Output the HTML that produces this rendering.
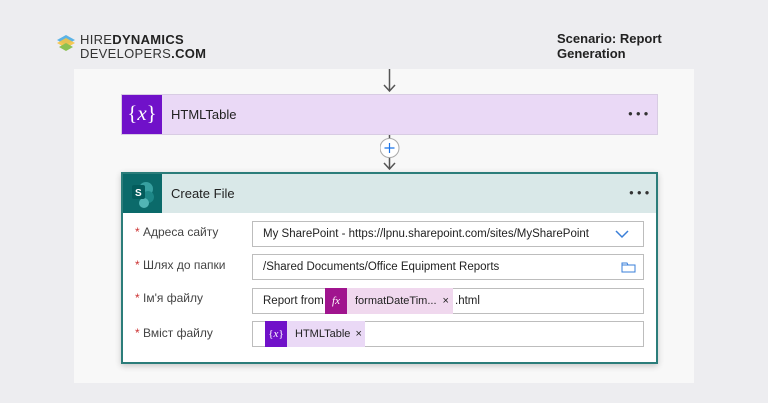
<!DOCTYPE html><html><head><style>
*{margin:0;padding:0;box-sizing:border-box}
body{width:768px;height:403px;background:#ededf0;font-family:"Liberation Sans","DejaVu Sans",sans-serif;position:relative;overflow:hidden;color:#222}
.abs{position:absolute}
.panel{left:74px;top:69px;width:620px;height:314px;background:#f8f8f8}
.card1{left:121px;top:94px;width:537px;height:41px;background:#ead9f6;border:1px solid #d8cce3}
.ic1{left:0;top:0;width:40px;height:39px;background:#7011c9;color:#fff;font-family:"Liberation Serif",serif;font-size:21px;text-align:center;line-height:37px}
.dots{font-size:8px;letter-spacing:3px;color:#333}
.card2{left:121px;top:172px;width:537px;height:192px;background:#fff;border:2px solid #2b7d7a;box-shadow:0 2px 6px rgba(0,0,0,.2)}
.hdr{left:0;top:0;width:533px;height:39px;background:#d9e8e8}
.lbl{font-size:12px;color:#444;left:12px}
.lbl b{color:#c33;font-weight:normal}
.inp{left:129px;width:392px;height:26px;border:1px solid #bdbdbd;font-size:11.5px;line-height:24px;padding-left:10px;white-space:nowrap}
.tok{position:absolute;top:-1px;height:26px;font-size:11px;line-height:26px;display:flex;white-space:nowrap}
.tok .i{width:22px;height:26px;color:#fff;text-align:center;font-family:'Liberation Serif',serif;flex:none}
</style></head><body>
<div class="abs" style="left:56px;top:34px">
<svg width="20" height="20" viewBox="0 0 20 20"><polygon points="10,1 19,6 10,11 1,6" fill="#5bb3e6"/><polygon points="1,9 10,14 19,9 10,4" fill="#f5c342" opacity=".9"/><polygon points="3,13 10,17 17,13 10,9" fill="#8cc152"/></svg></div>
<div class="abs" style="left:80px;top:33px;font-size:13px;line-height:14px;color:#333;letter-spacing:.3px">HIRE<b style="color:#222">DYNAMICS</b><br>DEVELOPERS<b style="color:#222">.COM</b></div>
<div class="abs" style="left:557px;top:31px;font-size:13px;line-height:15px;font-weight:bold;color:#222">Scenario: Report<br>Generation</div>
<div class="abs panel"></div>
<svg class="abs" style="left:380px;top:69px" width="20" height="110"><line x1="9.5" y1="0" x2="9.5" y2="22" stroke="#555" stroke-width="1.5"/><polyline points="4,16 9.5,22 15,16" fill="none" stroke="#555" stroke-width="1.5"/><line x1="9.5" y1="66" x2="9.5" y2="100" stroke="#555" stroke-width="1.5"/><polyline points="4,94 9.5,100 15,94" fill="none" stroke="#555" stroke-width="1.5"/><circle cx="9.5" cy="79" r="9.5" fill="#fff" stroke="#aaa"/><path d="M9.5 74v10M4.5 79h10" stroke="#1a73e8" stroke-width="1.2"/></svg>
<div class="abs card1"><div class="abs ic1">{<i>x</i>}</div><div class="abs" style="left:49px;top:12px;font-size:13px">HTMLTable</div><div class="abs dots" style="left:506px;top:14px">●●●</div></div>
<div class="abs card2"><div class="abs hdr">
<div class="abs" style="left:0;top:0;width:39px;height:39px;background:#0b6a6a"><svg width="39" height="39"><circle cx="23" cy="15" r="7" fill="#37a0a0"/><circle cx="25" cy="23" r="6" fill="#1d8787"/><circle cx="21" cy="29" r="5" fill="#52b5b5"/><rect x="9" y="11" width="13" height="14" rx="2" fill="#035c5c"/><text x="12" y="22" fill="#fff" font-size="10" font-weight="bold" font-family="Liberation Sans">S</text></svg></div>
<div class="abs" style="left:48px;top:12px;font-size:13px">Create File</div><div class="abs dots" style="left:506px;top:14px">●●●</div></div>
<div class="abs lbl" style="top:51px"><b>*</b> Адреса сайту</div>
<div class="abs lbl" style="top:84px"><b>*</b> Шлях до папки</div>
<div class="abs lbl" style="top:117px"><b>*</b> Ім'я файлу</div>
<div class="abs lbl" style="top:152px"><b>*</b> Вміст файлу</div>
<div class="abs inp" style="top:47px">My SharePoint - https://lpnu.sharepoint.com/sites/MySharePoint<svg class="abs" style="right:14px;top:8px" width="14" height="9"><polyline points="1,1 7,7 13,1" fill="none" stroke="#3a7fd8" stroke-width="1.5"/></svg></div>
<div class="abs inp" style="top:80px">/Shared Documents/Office Equipment Reports<svg class="abs" style="right:7px;top:6px" width="15" height="12"><path d="M1 2h5l1 2h7v7H1z" fill="none" stroke="#3a7fd8"/><path d="M1 4h13" stroke="#3a7fd8"/></svg></div>
<div class="abs inp" style="top:114px">Report from<div class="tok" style="left:72px;width:128px;background:#f0d8ee"><span class="i" style="background:#a0148e;font-style:italic">fx</span><span style="margin-left:8px">formatDateTim...</span><span style="margin-left:6px">×</span></div><span class="abs" style="left:202px">.html</span></div>
<div class="abs inp" style="top:147px"><div class="tok" style="left:12px;width:100px;background:#ead9f6"><span class="i" style="background:#7011c9;font-size:11px">{<i>x</i>}</span><span style="margin-left:8px">HTMLTable</span><span style="margin-left:5px">×</span></div></div>
</div>
</body></html>
